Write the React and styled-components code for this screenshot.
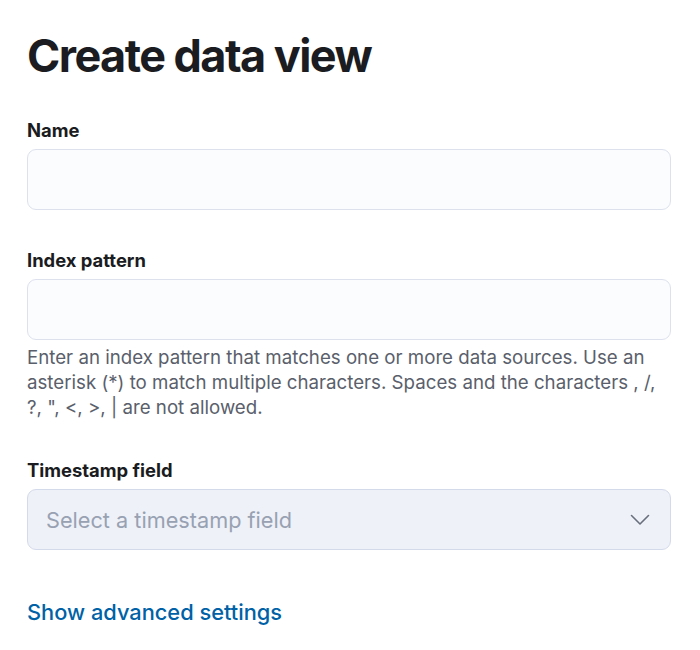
import React from "react";
import styled, { createGlobalStyle } from "styled-components";

const Global = createGlobalStyle`
  html, body { margin: 0; padding: 0; background: #ffffff; }
  body { font-family: Inter, "Noto Sans", sans-serif; color: #1a1c21; -webkit-font-smoothing: antialiased; }
  * { box-sizing: border-box; }
`;

const Page = styled.main`
  width: 644px;
  margin-left: 27px;
  padding-top: 31px;
  display: flex;
  flex-direction: column;
`;

const Title = styled.h1`
  margin: 0;
  font-size: 45px;
  line-height: 50px;
  font-weight: 700;
  letter-spacing: -1.55px;
  color: #1a1c21;
`;

const Form = styled.form`
  display: flex;
  flex-direction: column;
  gap: 38px;
  margin-top: 37px;
`;

const Row = styled.div`
  display: flex;
  flex-direction: column;
`;

const Label = styled.label`
  font-size: 18.4px;
  line-height: 24px;
  font-weight: 700;
  color: #1a1c21;
  margin-bottom: 7px;
`;

const Field = styled.input`
  height: 61px;
  width: 100%;
  border: 1px solid #dde1ee;
  border-radius: 9px;
  background: #fbfcfd;
  padding: 0 18px;
  font: inherit;
  font-size: 21px;
  outline: none;
`;

const Help = styled.p`
  margin: 5px 0 0;
  font-size: 18.7px;
  line-height: 25px;
  color: #5a606b;
`;

const SelectBox = styled.div`
  height: 61px;
  border: 1px solid #d3daea;
  border-radius: 9px;
  background: #eef1f8;
  padding: 0 20px 0 18px;
  display: flex;
  align-items: center;
  justify-content: space-between;
`;

const Placeholder = styled.span`
  font-size: 21.7px;
  color: #98a1b2;
`;

const Link = styled.a`
  margin-top: 47px;
  font-size: 21.8px;
  line-height: 30px;
  font-weight: 500;
  color: #0061a6;
  text-decoration: none;
`;

const Chevron = () => (
  <svg width="20" height="12" viewBox="0 0 20 12" fill="none">
    <path d="M1.5 1.5 L10 10 L18.5 1.5" stroke="#69707d" strokeWidth="1.6" strokeLinecap="round" strokeLinejoin="round" />
  </svg>
);

export default function App() {
  return (
    <>
      <Global />
      <Page>
        <Title>Create data view</Title>
        <Form>
          <Row>
            <Label>Name</Label>
            <Field />
          </Row>
          <Row>
            <Label>Index pattern</Label>
            <Field />
            <Help>
              Enter an index pattern that matches one or more data sources. Use an asterisk (*) to match
              multiple characters. Spaces and the characters , /, ?, ", &lt;, &gt;, | are not allowed.
            </Help>
          </Row>
          <Row>
            <Label>Timestamp field</Label>
            <SelectBox>
              <Placeholder>Select a timestamp field</Placeholder>
              <Chevron />
            </SelectBox>
          </Row>
        </Form>
        <Link href="#">Show advanced settings</Link>
      </Page>
    </>
  );
}
